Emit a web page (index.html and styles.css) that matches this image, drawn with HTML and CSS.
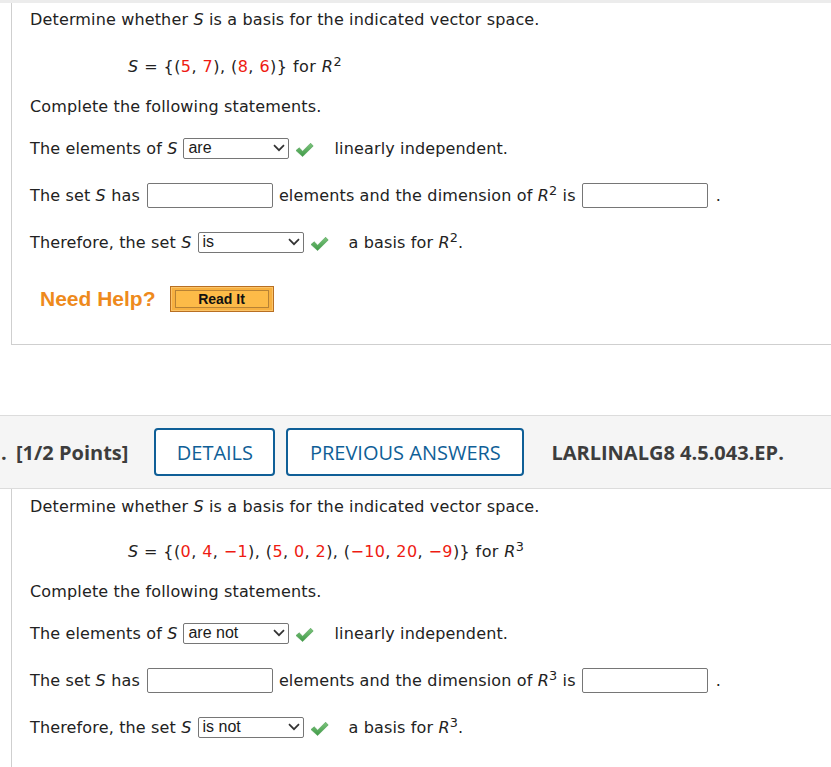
FILE: index.html
```html
<!DOCTYPE html>
<html>
<head>
<meta charset="utf-8">
<link rel="stylesheet" href="styles.css">
</head>
<body>
<div class="topstrip"></div>
<div class="qbox first">
  <p class="intro">Determine whether <i>S</i> is a basis for the indicated vector space.</p>
  <p class="formula"><i>S</i> = {(<span class="r">5</span>, <span class="r">7</span>), (<span class="r">8</span>, <span class="r">6</span>)} for <i>R</i><sup>2</sup></p>
  <p class="complete">Complete the following statements.</p>
  <div class="row r-el">
    <span>The elements of <i>S</i></span>
    <span class="sel w106"><span class="val">are</span><svg class="chev" viewBox="0 0 12 8" width="12" height="8"><path d="M1 1.2 L6 6.2 L11 1.2" fill="none" stroke="#333" stroke-width="1.7"/></svg></span>
    <svg class="chk" viewBox="0 0 19 16" width="19" height="16"><defs><linearGradient id="g1" x1="0" y1="0" x2="0" y2="1"><stop offset="0" stop-color="#7cc47c"/><stop offset="1" stop-color="#3f9a47"/></linearGradient></defs><path d="M1 8.5 L4.2 5.8 L7.6 9.2 L15.6 1.2 L18.2 4 L7.6 14.6 Z" fill="url(#g1)" stroke="#4a9a4f" stroke-width="0.6" stroke-linejoin="round"/></svg>
    <span class="after">linearly independent.</span>
  </div>
  <div class="row r-set">
    <span>The set <i>S</i> has</span>
    <span class="inp"></span>
    <span class="mid">elements and the dimension of <i>R</i><sup>2</sup> is</span>
    <span class="inp"></span>
    <span class="dot">.</span>
  </div>
  <div class="row r-th">
    <span>Therefore, the set <i>S</i></span>
    <span class="sel w106"><span class="val">is</span><svg class="chev" viewBox="0 0 12 8" width="12" height="8"><path d="M1 1.2 L6 6.2 L11 1.2" fill="none" stroke="#333" stroke-width="1.7"/></svg></span>
    <svg class="chk" viewBox="0 0 19 16" width="19" height="16"><defs><linearGradient id="g2" x1="0" y1="0" x2="0" y2="1"><stop offset="0" stop-color="#7cc47c"/><stop offset="1" stop-color="#3f9a47"/></linearGradient></defs><path d="M1 8.5 L4.2 5.8 L7.6 9.2 L15.6 1.2 L18.2 4 L7.6 14.6 Z" fill="url(#g2)" stroke="#4a9a4f" stroke-width="0.6" stroke-linejoin="round"/></svg>
    <span class="after">a basis for <i>R</i><sup>2</sup>.</span>
  </div>
  <div class="help">
    <span class="need">Need Help?</span>
    <span class="readit"><span class="readit-in">Read It</span></span>
  </div>
</div>

<div class="qhead">
  <span class="num">.</span>
  <span class="pts">[1/2 Points]</span>
  <span class="btn b-details">DETAILS</span>
  <span class="btn b-prev">PREVIOUS ANSWERS</span>
  <span class="code">LARLINALG8 4.5.043.EP.</span>
</div>

<div class="qbox second">
  <p class="intro">Determine whether <i>S</i> is a basis for the indicated vector space.</p>
  <p class="formula"><i>S</i> = {(<span class="r">0</span>, <span class="r">4</span>, <span class="r">&minus;1</span>), (<span class="r">5</span>, <span class="r">0</span>, <span class="r">2</span>), (<span class="r">&minus;10</span>, <span class="r">20</span>, <span class="r">&minus;9</span>)} for <i>R</i><sup>3</sup></p>
  <p class="complete">Complete the following statements.</p>
  <div class="row r-el">
    <span>The elements of <i>S</i></span>
    <span class="sel w106"><span class="val">are not</span><svg class="chev" viewBox="0 0 12 8" width="12" height="8"><path d="M1 1.2 L6 6.2 L11 1.2" fill="none" stroke="#333" stroke-width="1.7"/></svg></span>
    <svg class="chk" viewBox="0 0 19 16" width="19" height="16"><defs><linearGradient id="g3" x1="0" y1="0" x2="0" y2="1"><stop offset="0" stop-color="#7cc47c"/><stop offset="1" stop-color="#3f9a47"/></linearGradient></defs><path d="M1 8.5 L4.2 5.8 L7.6 9.2 L15.6 1.2 L18.2 4 L7.6 14.6 Z" fill="url(#g3)" stroke="#4a9a4f" stroke-width="0.6" stroke-linejoin="round"/></svg>
    <span class="after">linearly independent.</span>
  </div>
  <div class="row r-set">
    <span>The set <i>S</i> has</span>
    <span class="inp"></span>
    <span class="mid">elements and the dimension of <i>R</i><sup>3</sup> is</span>
    <span class="inp"></span>
    <span class="dot">.</span>
  </div>
  <div class="row r-th">
    <span>Therefore, the set <i>S</i></span>
    <span class="sel w106"><span class="val">is not</span><svg class="chev" viewBox="0 0 12 8" width="12" height="8"><path d="M1 1.2 L6 6.2 L11 1.2" fill="none" stroke="#333" stroke-width="1.7"/></svg></span>
    <svg class="chk" viewBox="0 0 19 16" width="19" height="16"><defs><linearGradient id="g4" x1="0" y1="0" x2="0" y2="1"><stop offset="0" stop-color="#7cc47c"/><stop offset="1" stop-color="#3f9a47"/></linearGradient></defs><path d="M1 8.5 L4.2 5.8 L7.6 9.2 L15.6 1.2 L18.2 4 L7.6 14.6 Z" fill="url(#g4)" stroke="#4a9a4f" stroke-width="0.6" stroke-linejoin="round"/></svg>
    <span class="after">a basis for <i>R</i><sup>3</sup>.</span>
  </div>
</div>
</body>
</html>
```

FILE: styles.css
```css
html, body {
  margin: 0;
  padding: 0;
  background: #fff;
}
body {
  font-family: "DejaVu Sans", Verdana, sans-serif;
  font-size: 16px;
  letter-spacing: 0.15px;
  color: #222;
  width: 831px;
  overflow: hidden;
}
.topstrip {
  height: 3px;
  background: #ececec;
}
.qbox {
  margin-left: 11px;
  border-left: 1px solid #cfcfcf;
  padding-left: 18px;
}
.qbox.first {
  padding-top: 7px;
  padding-bottom: 32px;
  border-bottom: 1px solid #cfcfcf;
}
.qbox.second {
  padding-top: 8px;
  height: 271px;
}
p {
  margin: 0;
  line-height: 20px;
}
.formula {
  margin-top: 27px;
  margin-left: 98px;
  letter-spacing: 0.45px;
}
.second .formula {
  margin-top: 25px;
  letter-spacing: 0.4px;
}
.r {
  color: #ee1b12;
}
sup {
  font-size: 0.8em;
  line-height: 0;
  vertical-align: 0.45em;
}
.complete {
  margin-top: 20px;
}
.row {
  display: flex;
  align-items: center;
  height: 26px;
  white-space: nowrap;
}
.r-el {
  margin-top: 18px;
}
.r-set {
  margin-top: 21px;
}
.r-th {
  margin-top: 21px;
}
.sel {
  display: inline-flex;
  align-items: center;
  justify-content: space-between;
  box-sizing: border-box;
  height: 21px;
  border: 1px solid #767676;
  border-radius: 2px;
  margin-left: 6px;
  padding: 0 3px 0 4px;
  font-family: "Liberation Sans", Arial, sans-serif;
  font-size: 16px;
  letter-spacing: 0;
  color: #1a1a1a;
  background: #fff;
}
.w106 {
  width: 106px;
}
.chev {
  display: block;
}
.chk {
  display: block;
  margin-left: 6px;
  margin-top: 4px;
}
.after {
  margin-left: 20px;
}
.inp {
  display: inline-block;
  box-sizing: border-box;
  width: 126px;
  height: 25px;
  border: 1px solid #767676;
  border-radius: 2px;
  margin-left: 7px;
  background: #fff;
}
.mid {
  margin-left: 6px;
  margin-right: -1px;
}
.dot {
  margin-left: 8px;
}
.help {
  display: flex;
  align-items: center;
  margin-top: 31px;
  margin-left: 10px;
  height: 26px;
  letter-spacing: 0;
}
.need {
  font-family: "Liberation Sans", Arial, sans-serif;
  font-weight: bold;
  font-size: 21px;
  color: #ee8a1c;
}
.readit {
  display: inline-flex;
  box-sizing: border-box;
  width: 104px;
  height: 26px;
  margin-left: 14px;
  padding: 3px 4px;
  border: 1px solid #b86f22;
  background: #f7b040;
  box-shadow: inset 0 0 0 1px #fbc468;
}
.readit-in {
  flex: 1;
  display: flex;
  align-items: center;
  justify-content: center;
  border: 1px solid #b88234;
  background: #fdbb48;
  font-family: "Liberation Sans", Arial, sans-serif;
  font-weight: bold;
  font-size: 14px;
  color: #111;
}
.qhead {
  margin-top: 70px;
  height: 72px;
  border-top: 1px solid #dcdcdc;
  border-bottom: 1px solid #dcdcdc;
  background: #f5f5f5;
  display: flex;
  align-items: center;
  font-family: "Open Sans", sans-serif;
  font-size: 20px;
  letter-spacing: 0;
  white-space: nowrap;
}
.num {
  font-weight: bold;
  color: #3d3d3d;
  margin-left: 1px;
  width: 15px;
}
.pts {
  font-weight: bold;
  color: #3d3d3d;
}
.btn {
  box-sizing: border-box;
  height: 48px;
  display: inline-flex;
  align-items: center;
  justify-content: center;
  border: 2px solid #0f5f97;
  border-radius: 4px;
  color: #0f5f97;
  background: #fff;
  font-weight: 500;
}
.b-details {
  width: 121px;
  margin-left: 26px;
}
.b-prev {
  width: 238px;
  margin-left: 11px;
}
.code {
  font-weight: bold;
  color: #3d3d3d;
  margin-left: 27px;
}
```
